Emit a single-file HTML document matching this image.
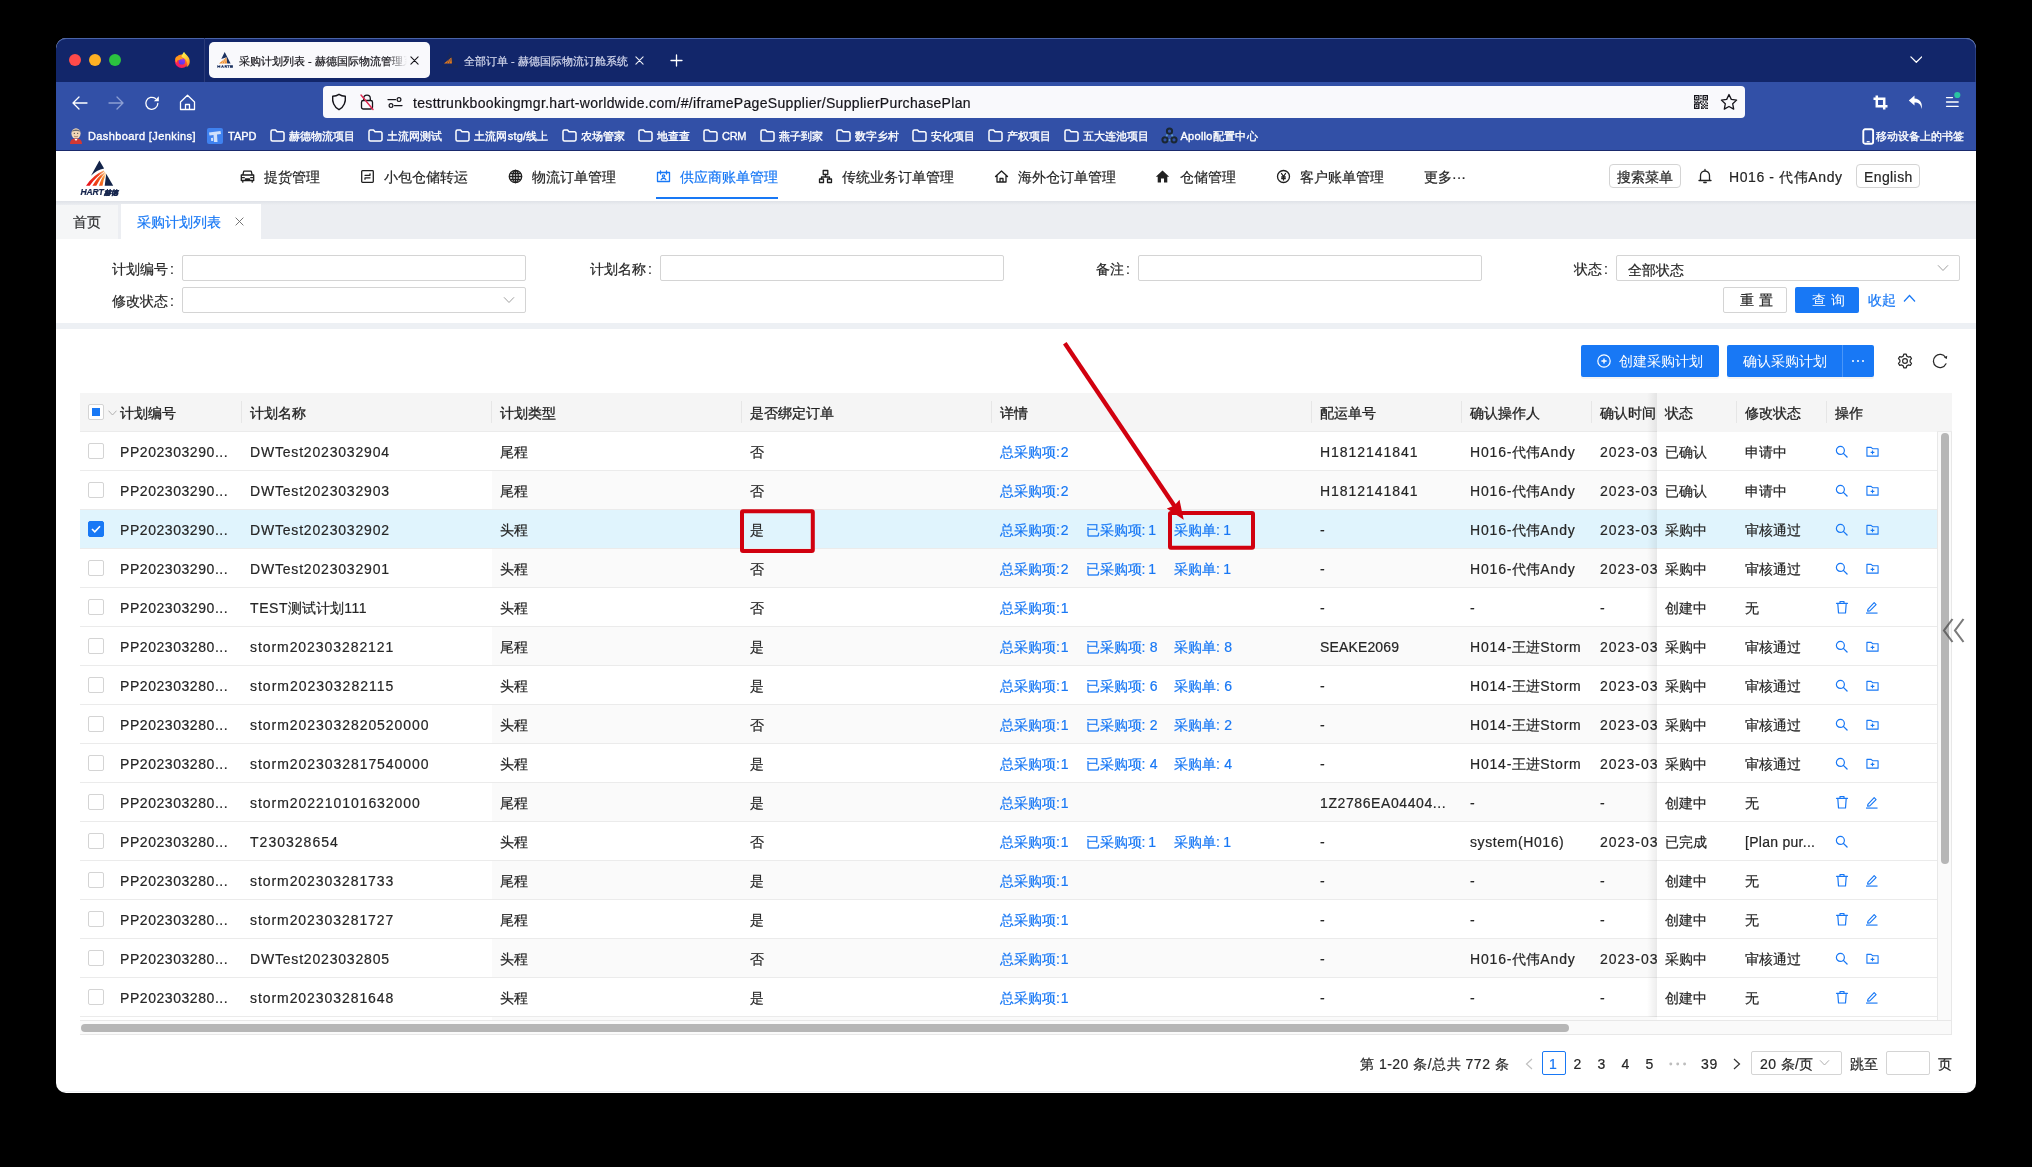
<!DOCTYPE html>
<html lang="zh"><head><meta charset="utf-8"><title>采购计划列表 - 赫德国际物流管理</title>
<style>
*{box-sizing:border-box;margin:0;padding:0}
html,body{width:2032px;height:1167px;overflow:hidden;background:#000}
body{font-family:"Liberation Sans",sans-serif;font-size:14px;color:#262626;position:relative;-webkit-text-stroke:0.2px}
.a{position:absolute}
.t{position:absolute;white-space:nowrap;line-height:20px;height:20px}
#win{left:56px;top:38px;width:1920px;height:1055px;border-radius:10px;overflow:hidden;background:#fff}
#tabbar{left:56px;top:38px;width:1920px;height:44px;background:#12266a;border-radius:10px 10px 0 0;box-shadow:inset 0 1px 0 rgba(110,140,210,.6),inset -1px 0 0 rgba(110,140,210,.25)}
#navbar{left:56px;top:82px;width:1920px;height:68px;background:#3250a7}
.bm{font-size:11px;color:#fff;top:126px;-webkit-text-stroke:0.35px #fff}
.nav{font-size:14px;color:#262626;top:166.5px}
.lbl{font-size:14px;color:#262626}
.inp{border:1px solid #d4d4d4;border-radius:2px;background:#fff;height:26px;width:344px}
.th{color:#222;top:403px;-webkit-text-stroke:0.3px #222}
.sep{width:1px;height:22px;top:401px;background:#e6e6e6}
.row{left:80px;width:1857px;height:39px;border-bottom:1px solid #ebebeb}
.c{position:absolute;white-space:nowrap;line-height:20px;height:20px;top:9.5px;color:#262626}
.lk{color:#1878f5}
.cb{position:absolute;left:8px;top:11px;width:16px;height:16px;border:1px solid #d4d4d4;border-radius:2px;background:#fff}
.ic{position:absolute}
.pg{font-size:14px;color:#262626;top:1054px}
</style></head>
<body>
<div class="a" id="root" style="left:0;top:0;width:2032px;height:1167px;will-change:transform">
<div class="a" id="win"></div>
<div class="a" id="tabbar"></div>
<div class="a" id="navbar"></div>
<div class="a" style="left:69px;top:54px;width:12px;height:12px;border-radius:6px;background:#fe4a4a"></div><div class="a" style="left:89px;top:54px;width:12px;height:12px;border-radius:6px;background:#feb024"></div><div class="a" style="left:109px;top:54px;width:12px;height:12px;border-radius:6px;background:#2bc13f"></div>
<svg class="a" style="left:174px;top:52px" width="16" height="16" viewBox="0 0 16 16"><defs><linearGradient id="ffa" x1="0.85" y1="0.1" x2="0.25" y2="1"><stop offset="0" stop-color="#ffc32e"/><stop offset="0.3" stop-color="#ff7a1e"/><stop offset="0.62" stop-color="#ff3040"/><stop offset="1" stop-color="#ee0f7c"/></linearGradient><linearGradient id="ffb" x1="0.3" y1="0" x2="0.8" y2="1"><stop offset="0" stop-color="#fff44f"/><stop offset="0.6" stop-color="#ffbd2e"/><stop offset="1" stop-color="#ff8a1e"/></linearGradient><linearGradient id="ffc" x1="0.7" y1="0" x2="0.3" y2="1"><stop offset="0" stop-color="#a033e8"/><stop offset="1" stop-color="#4a3cf0"/></linearGradient></defs><circle cx="7.700" cy="9.200" r="6.800" fill="url(#ffa)"/><path d="M7.600 5C7.900 3 9 1.200 10.100 -0.200C10.800 1.600 12.300 2.600 13.500 3.900C15.600 6.100 16.300 9 15.300 12.200C14.600 13.500 13.600 14.600 12.300 15.200C13.300 13.800 13.500 12 13 10.600C12.700 8 10.500 6 7.600 5Z" fill="url(#ffb)"/><circle cx="7.900" cy="9.400" r="3.200" fill="url(#ffc)"/><path d="M1.800 5.300C2.500 4.500 3.300 4.300 4.200 4.500C4.400 4 4.700 3.500 5.200 3.200C5.500 4.100 6.100 4.700 6.900 5.100C8 5.700 8.700 6.500 8.900 7.500C8 7 7 7 6.100 7.500C5.500 8.200 4.900 8.300 4 8C3.100 8.500 2.600 9.500 2.800 11C1.200 9.500 0.900 7.100 1.800 5.300Z" fill="#ff9a1a"/></svg>
<div class="a" style="left:204px;top:38px;width:1px;height:44px;background:#2b3b78"></div>
<div class="a" style="left:209px;top:42px;width:221px;height:36px;border-radius:5px;background:#f9f9fc"></div>
<svg class="a" style="left:217px;top:52px" width="16" height="16" viewBox="0 0 16 16"><path d="M7.700 0L13.600 11.500H10.200L9.500 5.300L4.300 7Z" fill="#1b3160"/><path d="M9.400 5.400L9.900 11.500H2Z" fill="#f08a24"/><path d="M7.300 7.400L4.800 11.500M8.600 7.300L7.300 11.500" stroke="#f9f9fc" stroke-width="0.500"/><path d="M0.300 13.300h1v0.800h1v-0.800h1v2.500h-1v-0.900h-1v0.900h-1zM4 15.800l1-2.500h1l1 2.500h-0.900l-0.200-0.500h-0.900l-0.200 0.500zM7.600 13.300h2.200v1.500l0.500 1h-1l-0.400-0.900h-0.400v0.900h-0.900zM10.200 13.300h2.400v0.700h-0.800v1.800h-0.900v-1.800h-0.700zM12.900 13.300h3v2.500h-3z" fill="#1b3160"/></svg>
<div class="t" style="left:239px;top:51.5px;font-size:11px;color:#15141a;width:168px;overflow:hidden;line-height:18px;height:18px">采购计划列表 - 赫德国际物流管理系统</div>
<div class="a" style="left:387px;top:46px;width:20px;height:28px;background:linear-gradient(90deg,rgba(249,249,252,0),#f9f9fc)"></div>
<svg class="a" style="left:409.5px;top:55.5px" width="9" height="9" viewBox="0 0 10 10"><path d="M1 1L9 9M9 1L1 9" stroke="#15141a" stroke-width="1.2" fill="none" stroke-linecap="round"/></svg>
<svg class="a" style="left:442px;top:52px" width="16" height="16" viewBox="0 0 16 16"><path d="M7.700 0L13.600 11.500H10.200L9.500 5.300L4.300 7Z" fill="#18285c"/><path d="M9.400 5.400L9.900 11.500H2Z" fill="#f07f17"/><path d="M7.300 7.400L4.800 11.500M8.600 7.300L7.300 11.500" stroke="#12266a" stroke-width="0.500"/><path d="M0.300 13.300h1v0.800h1v-0.800h1v2.500h-1v-0.900h-1v0.900h-1zM4 15.800l1-2.500h1l1 2.500h-0.900l-0.200-0.500h-0.900l-0.200 0.500zM7.600 13.300h2.200v1.500l0.500 1h-1l-0.400-0.900h-0.400v0.900h-0.900zM10.200 13.300h2.400v0.700h-0.800v1.800h-0.900v-1.800h-0.700zM12.900 13.300h3v2.500h-3z" fill="#18285c"/></svg>
<div class="t" style="left:464px;top:51.5px;font-size:11px;color:#d3d7ec;line-height:18px;height:18px">全部订单 - 赫德国际物流订舱系统</div>
<svg class="a" style="left:634.5px;top:55.5px" width="9" height="9" viewBox="0 0 10 10"><path d="M1 1L9 9M9 1L1 9" stroke="#f0f1f8" stroke-width="1.2" fill="none" stroke-linecap="round"/></svg>
<svg class="a" style="left:670px;top:54px" width="13" height="13" viewBox="0 0 13 13"><path d="M6.500 1V12M1 6.500H12" stroke="#fff" stroke-width="1.300" stroke-linecap="round"/></svg>
<svg class="a" style="left:1909.700px;top:56px" width="12.600" height="7.200" viewBox="0 0 14 8"><path d="M1 1L7 7L13 1" stroke="#fff" stroke-width="1.400" fill="none" stroke-linecap="round" stroke-linejoin="round"/></svg>
<svg class="a" style="left:72px;top:96px" width="16" height="14" viewBox="0 0 16 14"><path d="M15 7H1.500M7 1L1 7L7 13" stroke="#fff" stroke-width="1.300" fill="none" stroke-linecap="round" stroke-linejoin="round"/></svg>
<svg class="a" style="left:108px;top:96px" width="16" height="14" viewBox="0 0 16 14"><path d="M1 7H14.500M9 1L15 7L9 13" stroke="#8d9fd3" stroke-width="1.300" fill="none" stroke-linecap="round" stroke-linejoin="round"/></svg>
<svg class="a" style="left:144px;top:95px" width="16" height="16" viewBox="0 0 16 16"><path d="M13.800 8.500A6 6 0 1 1 11.500 3.600" stroke="#fff" stroke-width="1.300" fill="none" stroke-linecap="round"/><path d="M14.800 1.300V6.200H9.900Z" fill="#fff"/></svg>
<svg class="a" style="left:179px;top:94px" width="17" height="17" viewBox="0 0 17 17"><path d="M1.500 8L8.500 1.300L15.500 8V15.500H1.500Z M6.500 15.500V10.500H10.500V15.500" stroke="#fff" stroke-width="1.300" fill="none" stroke-linejoin="round"/></svg>
<div class="a" style="left:323px;top:86px;width:1422px;height:32px;border-radius:4px;background:#f9f9fc"></div>
<svg class="a" style="left:331px;top:93px" width="16" height="18" viewBox="0 0 16 18"><path d="M8 1.300C10 2.600 12 3.100 14.300 3.300C14.600 6 14.400 8.500 13.300 11C12.200 13.500 10.300 15.500 8 16.700C5.700 15.500 3.800 13.500 2.700 11C1.600 8.500 1.400 6 1.700 3.300C4 3.100 6 2.600 8 1.300Z" stroke="#15141a" stroke-width="1.400" fill="none" stroke-linejoin="round"/></svg>
<svg class="a" style="left:359px;top:93px" width="16" height="18" viewBox="0 0 16 18"><path d="M4.700 7.500V5.500A3.300 3.300 0 0 1 11.300 5.500V7.500" stroke="#15141a" stroke-width="1.300" fill="none"/><rect x="2.500" y="7.500" width="11" height="8.500" rx="1.800" stroke="#15141a" stroke-width="1.300" fill="none"/><path d="M2 2L14 16.500" stroke="#e22850" stroke-width="1.400" stroke-linecap="round"/></svg>
<svg class="a" style="left:387px;top:95px" width="16" height="15" viewBox="0 0 16 15"><path d="M1 4.600H8.500" stroke="#15141a" stroke-width="1.300" stroke-linecap="round"/><circle cx="12" cy="4.600" r="1.900" stroke="#15141a" stroke-width="1.200" fill="none"/><path d="M7.500 10.600H15" stroke="#15141a" stroke-width="1.300" stroke-linecap="round"/><circle cx="4" cy="10.600" r="1.900" stroke="#15141a" stroke-width="1.200" fill="none"/></svg>
<div class="t" style="left:413px;top:93px;font-size:14px;color:#15141a;letter-spacing:0.32px">testtrunkbookingmgr.hart-worldwide.com/#/iframePageSupplier/SupplierPurchasePlan</div>
<svg class="a" style="left:1694px;top:95px" width="14" height="14" viewBox="0 0 14 14" fill="#15141a"><rect x="0.65" y="0.65" width="4.200" height="4.200" stroke="#15141a" stroke-width="1.300" fill="none"/><rect x="2.00" y="2.00" width="1.500" height="1.500"/><rect x="9.15" y="0.65" width="4.200" height="4.200" stroke="#15141a" stroke-width="1.300" fill="none"/><rect x="10.50" y="2.00" width="1.500" height="1.500"/><rect x="0.65" y="9.15" width="4.200" height="4.200" stroke="#15141a" stroke-width="1.300" fill="none"/><rect x="2.00" y="10.50" width="1.500" height="1.500"/><rect x="6.2" y="0.0" width="1.500" height="1.500"/><rect x="6.2" y="2.8" width="1.500" height="1.500"/><rect x="6.2" y="5.6" width="1.500" height="1.500"/><rect x="0.0" y="6.2" width="1.500" height="1.500"/><rect x="2.8" y="6.2" width="1.500" height="1.500"/><rect x="5.6" y="7.0" width="1.500" height="1.500"/><rect x="8.4" y="6.2" width="1.500" height="1.500"/><rect x="11.2" y="6.2" width="1.500" height="1.500"/><rect x="12.6" y="7.6" width="1.500" height="1.500"/><rect x="7.0" y="8.4" width="1.500" height="1.500"/><rect x="9.8" y="8.4" width="1.500" height="1.500"/><rect x="12.6" y="9.8" width="1.500" height="1.500"/><rect x="8.4" y="9.8" width="1.500" height="1.500"/><rect x="11.2" y="9.8" width="1.500" height="1.500"/><rect x="7.0" y="11.2" width="1.500" height="1.500"/><rect x="9.8" y="11.2" width="1.500" height="1.500"/><rect x="12.6" y="12.6" width="1.500" height="1.500"/><rect x="8.4" y="12.6" width="1.500" height="1.500"/><rect x="11.2" y="12.6" width="1.500" height="1.500"/><rect x="7.0" y="12.6" width="1.500" height="1.500"/><rect x="4.2" y="7.0" width="1.500" height="1.500"/><rect x="1.4" y="7.0" width="1.500" height="1.500"/></svg>
<svg class="a" style="left:1720px;top:93px" width="18" height="18" viewBox="0 0 18 18"><path d="M9 1.500L11.300 6.400L16.600 7.100L12.700 10.800L13.700 16.100L9 13.500L4.300 16.100L5.300 10.800L1.400 7.100L6.700 6.400Z" stroke="#15141a" stroke-width="1.300" fill="none" stroke-linejoin="round"/></svg>
<svg class="a" style="left:1873px;top:94.500px" width="15" height="15" viewBox="0 0 15 15"><path d="M3.800 0.500V11.200H14.500M0.500 3.800H11.200V14.500" stroke="#fff" stroke-width="2.500" fill="none"/></svg>
<svg class="a" style="left:1908px;top:94px" width="16" height="16" viewBox="0 0 16 16"><path d="M6.500 1.500L0.800 6.500L6.500 11.500V8.400C10.500 8.400 13 10 13.500 15C15 9.500 12 4.800 6.500 4.600Z" fill="#fff"/></svg>
<svg class="a" style="left:1945px;top:91px" width="18" height="18" viewBox="0 0 18 18"><path d="M1.500 6.600H7.500M1.500 11H13.200M1.500 15.300H13.200" stroke="#fff" stroke-width="1.300" stroke-linecap="round"/><circle cx="12.300" cy="4" r="3.100" fill="#2ac3a2"/></svg>
<svg class="a" style="left:68px;top:127px" width="16" height="17" viewBox="0 0 16 17"><ellipse cx="8" cy="6.500" rx="4.600" ry="5.200" fill="#f0d6b7"/><path d="M3.400 5C3.800 1.500 12.200 1.500 12.600 5C11 3.600 5 3.600 3.400 5Z" fill="#6d6b6d"/><path d="M2 17C2 12.500 5 11.500 8 11.500S14 12.500 14 17Z" fill="#d33833"/><path d="M6.500 12L8 14L9.500 12Z" fill="#fff"/><circle cx="6.300" cy="6.300" r="0.600" fill="#333"/><circle cx="9.700" cy="6.300" r="0.600" fill="#333"/><path d="M6 9.200Q8 10.300 10 9.200" stroke="#81603f" stroke-width="0.600" fill="none"/></svg>
<div class="t bm" style="left:88px;letter-spacing:0.40px">Dashboard [Jenkins]</div>
<svg class="a" style="left:207px;top:128px" width="16" height="16" viewBox="0 0 16 16"><rect width="16" height="16" rx="2" fill="#3f82f0"/><path d="M2 4.500L13.500 3L14 6L10 6.500L10.500 14H7L6.500 7L2.500 7.500Z" fill="#cfe0fb"/><path d="M4 10L6 9.800L6.200 13L4.200 13Z" fill="#cfe0fb"/></svg>
<div class="t bm" style="left:228px;letter-spacing:-0.01px">TAPD</div>
<svg class="a" style="left:270px;top:129px" width="15" height="13" viewBox="0 0 15 13"><path d="M1 2.500A1.500 1.500 0 0 1 2.500 1H5.500L7 2.800H12.500A1.500 1.500 0 0 1 14 4.300V10.500A1.500 1.500 0 0 1 12.500 12H2.500A1.500 1.500 0 0 1 1 10.500Z" stroke="#fff" stroke-width="1.500" fill="none" stroke-linejoin="round"/></svg><div class="t bm" style="left:289px">赫德物流项目</div>
<svg class="a" style="left:368px;top:129px" width="15" height="13" viewBox="0 0 15 13"><path d="M1 2.500A1.500 1.500 0 0 1 2.500 1H5.500L7 2.800H12.500A1.500 1.500 0 0 1 14 4.300V10.500A1.500 1.500 0 0 1 12.500 12H2.500A1.500 1.500 0 0 1 1 10.500Z" stroke="#fff" stroke-width="1.500" fill="none" stroke-linejoin="round"/></svg><div class="t bm" style="left:387px">土流网测试</div>
<svg class="a" style="left:455px;top:129px" width="15" height="13" viewBox="0 0 15 13"><path d="M1 2.500A1.500 1.500 0 0 1 2.500 1H5.500L7 2.800H12.500A1.500 1.500 0 0 1 14 4.300V10.500A1.500 1.500 0 0 1 12.500 12H2.500A1.500 1.500 0 0 1 1 10.500Z" stroke="#fff" stroke-width="1.500" fill="none" stroke-linejoin="round"/></svg><div class="t bm" style="left:474px;letter-spacing:0.22px">土流网stg/线上</div>
<svg class="a" style="left:562px;top:129px" width="15" height="13" viewBox="0 0 15 13"><path d="M1 2.500A1.500 1.500 0 0 1 2.500 1H5.500L7 2.800H12.500A1.500 1.500 0 0 1 14 4.300V10.500A1.500 1.500 0 0 1 12.500 12H2.500A1.500 1.500 0 0 1 1 10.500Z" stroke="#fff" stroke-width="1.500" fill="none" stroke-linejoin="round"/></svg><div class="t bm" style="left:581px">农场管家</div>
<svg class="a" style="left:638px;top:129px" width="15" height="13" viewBox="0 0 15 13"><path d="M1 2.500A1.500 1.500 0 0 1 2.500 1H5.500L7 2.800H12.500A1.500 1.500 0 0 1 14 4.300V10.500A1.500 1.500 0 0 1 12.500 12H2.500A1.500 1.500 0 0 1 1 10.500Z" stroke="#fff" stroke-width="1.500" fill="none" stroke-linejoin="round"/></svg><div class="t bm" style="left:657px">地查查</div>
<svg class="a" style="left:703px;top:129px" width="15" height="13" viewBox="0 0 15 13"><path d="M1 2.500A1.500 1.500 0 0 1 2.500 1H5.500L7 2.800H12.500A1.500 1.500 0 0 1 14 4.300V10.500A1.500 1.500 0 0 1 12.500 12H2.500A1.500 1.500 0 0 1 1 10.500Z" stroke="#fff" stroke-width="1.500" fill="none" stroke-linejoin="round"/></svg><div class="t bm" style="left:722px;letter-spacing:-0.28px">CRM</div>
<svg class="a" style="left:760px;top:129px" width="15" height="13" viewBox="0 0 15 13"><path d="M1 2.500A1.500 1.500 0 0 1 2.500 1H5.500L7 2.800H12.500A1.500 1.500 0 0 1 14 4.300V10.500A1.500 1.500 0 0 1 12.500 12H2.500A1.500 1.500 0 0 1 1 10.500Z" stroke="#fff" stroke-width="1.500" fill="none" stroke-linejoin="round"/></svg><div class="t bm" style="left:779px">燕子到家</div>
<svg class="a" style="left:836px;top:129px" width="15" height="13" viewBox="0 0 15 13"><path d="M1 2.500A1.500 1.500 0 0 1 2.500 1H5.500L7 2.800H12.500A1.500 1.500 0 0 1 14 4.300V10.500A1.500 1.500 0 0 1 12.500 12H2.500A1.500 1.500 0 0 1 1 10.500Z" stroke="#fff" stroke-width="1.500" fill="none" stroke-linejoin="round"/></svg><div class="t bm" style="left:855px">数字乡村</div>
<svg class="a" style="left:912px;top:129px" width="15" height="13" viewBox="0 0 15 13"><path d="M1 2.500A1.500 1.500 0 0 1 2.500 1H5.500L7 2.800H12.500A1.500 1.500 0 0 1 14 4.300V10.500A1.500 1.500 0 0 1 12.500 12H2.500A1.500 1.500 0 0 1 1 10.500Z" stroke="#fff" stroke-width="1.500" fill="none" stroke-linejoin="round"/></svg><div class="t bm" style="left:931px">安化项目</div>
<svg class="a" style="left:988px;top:129px" width="15" height="13" viewBox="0 0 15 13"><path d="M1 2.500A1.500 1.500 0 0 1 2.500 1H5.500L7 2.800H12.500A1.500 1.500 0 0 1 14 4.300V10.500A1.500 1.500 0 0 1 12.500 12H2.500A1.500 1.500 0 0 1 1 10.500Z" stroke="#fff" stroke-width="1.500" fill="none" stroke-linejoin="round"/></svg><div class="t bm" style="left:1007px">产权项目</div>
<svg class="a" style="left:1064px;top:129px" width="15" height="13" viewBox="0 0 15 13"><path d="M1 2.500A1.500 1.500 0 0 1 2.500 1H5.500L7 2.800H12.500A1.500 1.500 0 0 1 14 4.300V10.500A1.500 1.500 0 0 1 12.500 12H2.500A1.500 1.500 0 0 1 1 10.500Z" stroke="#fff" stroke-width="1.500" fill="none" stroke-linejoin="round"/></svg><div class="t bm" style="left:1083px">五大连池项目</div>
<svg class="a" style="left:1160.500px;top:127px" width="17" height="17" viewBox="0 0 17 17"><path d="M7 6.300L4.800 10.300M10 6.300L12.200 10.300M6.500 13H10.500" stroke="#5e9fd6" stroke-width="1.600"/><circle cx="8.500" cy="4.200" r="2.600" stroke="#1a2733" stroke-width="2" fill="none"/><circle cx="4" cy="12.800" r="2.600" stroke="#1a2733" stroke-width="2" fill="none"/><circle cx="13" cy="12.800" r="2.600" stroke="#1a2733" stroke-width="2" fill="none"/></svg>
<div class="t bm" style="left:1180.5px;letter-spacing:0.27px">Apollo配置中心</div>
<svg class="a" style="left:1862px;top:127.500px" width="13" height="17" viewBox="0 0 13 17"><rect x="1.300" y="1.300" width="9.800" height="14.400" rx="1.800" stroke="#fff" stroke-width="1.900" fill="none"/><path d="M4.700 13.700H7.700" stroke="#fff" stroke-width="1.200"/></svg>
<div class="t bm" style="left:1876px">移动设备上的书签</div>
<div class="a" style="left:56px;top:150px;width:1920px;height:51px;background:#fff;border-top:1px solid #1a2a6c"></div>
<div class="a" style="left:56px;top:201px;width:1920px;height:38px;background:linear-gradient(#dfe2e8,#eceef2 4px,#eceef2)"></div>
<svg class="a" style="left:70px;top:152px" width="60" height="48" viewBox="0 0 60 48"><defs><linearGradient id="lg1" x1="0" y1="1" x2="0.9" y2="0"><stop offset="0" stop-color="#e6101c"/><stop offset="0.7" stop-color="#ee3a1a"/><stop offset="1" stop-color="#f7b070"/></linearGradient><linearGradient id="lg2" x1="0" y1="1" x2="0.8" y2="0"><stop offset="0" stop-color="#ea2a14"/><stop offset="0.7" stop-color="#f2601a"/><stop offset="1" stop-color="#f9c08a"/></linearGradient><linearGradient id="lg3" x1="0" y1="1" x2="0.6" y2="0"><stop offset="0" stop-color="#f0501a"/><stop offset="0.7" stop-color="#f58a2a"/><stop offset="1" stop-color="#fbd0a0"/></linearGradient></defs><path d="M29.400 8.400L34.100 16.400Q26.500 17.800 21 23.800Z" fill="#13244a"/><path d="M36.200 21.800L43.200 33.700H34.700Z" fill="#13244a"/><path d="M16 33.700Q23.500 22.800 33.600 18.500L34.500 19.600Q26.500 24.300 19.700 33.700Z" fill="url(#lg1)"/><path d="M22.400 33.700Q27.800 24.300 34.700 19.900L35.400 20.700Q30 26.200 26.300 33.700Z" fill="url(#lg2)"/><path d="M29 33.700Q31.300 25.800 35.600 20.900L36.100 21.900Q33.400 27.200 32.500 33.700Z" fill="url(#lg3)"/></svg>
<div class="t" style="left:80.500px;top:186.800px;font-size:8.600px;font-weight:bold;font-style:italic;color:#15254d;line-height:10px;height:10px;letter-spacing:-0.150px">HART<span style="font-size:7px;letter-spacing:0">赫德</span></div>
<svg class="a" style="left:240.0px;top:168.5px" width="15" height="15" viewBox="0 0 15 15"><path d="M2.800 6L3.800 2.200H11.200L12.200 6M1.300 6H13.700V11.500H1.300ZM2.800 11.500V13.200M12.200 11.500V13.200M1.300 8.700H4.300M10.700 8.700H13.700M5.500 11.500V10H9.500V11.500" stroke="#1f1f1f" stroke-width="1.300" fill="none" stroke-linejoin="round" stroke-linecap="round"/></svg>
<div class="t nav" style="left:264px">提货管理</div>
<svg class="a" style="left:360.0px;top:168.5px" width="15" height="15" viewBox="0 0 15 15"><rect x="1.700" y="1.700" width="11.600" height="11.600" rx="0.800" stroke="#1f1f1f" stroke-width="1.300" fill="none" stroke-linejoin="round" stroke-linecap="round"/><path d="M5 6.300H10V4.800M10 8.800H5V10.300" stroke="#1f1f1f" stroke-width="1.300" fill="none" stroke-linejoin="round" stroke-linecap="round"/></svg>
<div class="t nav" style="left:384px">小包仓储转运</div>
<svg class="a" style="left:508.0px;top:168.5px" width="15" height="15" viewBox="0 0 15 15"><circle cx="7.500" cy="7.500" r="6.200" stroke="#1f1f1f" stroke-width="1.300" fill="none" stroke-linejoin="round" stroke-linecap="round"/><ellipse cx="7.500" cy="7.500" rx="2.800" ry="6" stroke="#1f1f1f" stroke-width="1.300" fill="none" stroke-linejoin="round" stroke-linecap="round"/><path d="M1.500 7.500H13.500M2.500 4.500H12.500M2.500 10.500H12.500M7.500 1.500V13.500" stroke="#1f1f1f" stroke-width="1.300" fill="none" stroke-linejoin="round" stroke-linecap="round"/></svg>
<div class="t nav" style="left:532px">物流订单管理</div>
<svg class="a" style="left:656.0px;top:168.5px" width="15" height="15" viewBox="0 0 15 15"><path d="M1.500 3.500H13.500V12.500H1.500ZM4.500 2V5M10.500 2V5" stroke="#1878f5" stroke-width="1.300" fill="none" stroke-linejoin="round" stroke-linecap="round"/><circle cx="7.500" cy="7" r="1.200" stroke="#1878f5" stroke-width="1.300" fill="none" stroke-linejoin="round" stroke-linecap="round"/><path d="M5.200 10.500C5.500 9 9.500 9 9.800 10.500" stroke="#1878f5" stroke-width="1.300" fill="none" stroke-linejoin="round" stroke-linecap="round"/></svg>
<div class="t nav" style="left:680px;color:#1878f5">供应商账单管理</div>
<div class="a" style="left:656px;top:197px;width:122px;height:2px;background:#1878f5"></div>
<svg class="a" style="left:818.0px;top:169.0px" width="15" height="15" viewBox="0 0 15 15"><rect x="5.200" y="1.500" width="4.600" height="4" stroke="#1f1f1f" stroke-width="1.300" fill="none" stroke-linejoin="round" stroke-linecap="round" stroke-width="1.400"/><rect x="1.500" y="10" width="4" height="3.500" stroke="#1f1f1f" stroke-width="1.300" fill="none" stroke-linejoin="round" stroke-linecap="round" stroke-width="1.400"/><rect x="9.500" y="10" width="4" height="3.500" stroke="#1f1f1f" stroke-width="1.300" fill="none" stroke-linejoin="round" stroke-linecap="round" stroke-width="1.400"/><path d="M7.500 5.500V8M3.500 10V8H11.500V10" stroke="#1f1f1f" stroke-width="1.300" fill="none" stroke-linejoin="round" stroke-linecap="round" stroke-width="1.400"/></svg>
<div class="t nav" style="left:842px">传统业务订单管理</div>
<svg class="a" style="left:994.0px;top:169.0px" width="15" height="15" viewBox="0 0 15 15"><path d="M1.500 7.500L7.500 2L13.500 7.500M3 6.500V13H12V6.500M6 13V9.500H9V13" stroke="#1f1f1f" stroke-width="1.300" fill="none" stroke-linejoin="round" stroke-linecap="round"/></svg>
<div class="t nav" style="left:1018px">海外仓订单管理</div>
<svg class="a" style="left:1155.0px;top:169.0px" width="15" height="15" viewBox="0 0 15 15"><path d="M0.800 7.800L7.500 1.500L14.200 7.800H12.300V13.500H9V9.500H6V13.500H2.700V7.800Z" fill="#222"/></svg>
<div class="t nav" style="left:1180px">仓储管理</div>
<svg class="a" style="left:1276.0px;top:169.0px" width="15" height="15" viewBox="0 0 15 15"><circle cx="7.500" cy="7.500" r="6" stroke="#1f1f1f" stroke-width="1.300" fill="none" stroke-linejoin="round" stroke-linecap="round"/><path d="M5.500 4.500L7.500 7.500L9.500 4.500M7.500 7.500V11M5.700 8H9.300M5.700 9.700H9.300" stroke="#1f1f1f" stroke-width="1.300" fill="none" stroke-linejoin="round" stroke-linecap="round"/></svg>
<div class="t nav" style="left:1300px">客户账单管理</div>
<div class="t nav" style="left:1424px">更多···</div>
<div class="a" style="left:1609px;top:164px;width:72px;height:24px;border:1px solid #d4d4d4;border-radius:4px"></div>
<div class="t nav" style="left:1617px">搜索菜单</div>
<svg class="a" style="left:1697.0px;top:168.0px" width="16" height="17" viewBox="0 0 16 17"><path d="M3.500 12.500V7.500A4.500 4.500 0 0 1 12.500 7.500V12.500M2 12.500H14M6.800 14.500H9.200M8 1.500V3" stroke="#222" stroke-width="1.300" fill="none" stroke-linecap="round"/></svg>
<div class="t nav" style="left:1729px;letter-spacing:0.600px">H016 - 代伟Andy</div>
<div class="a" style="left:1856px;top:164px;width:64px;height:24px;border:1px solid #d4d4d4;border-radius:4px"></div>
<div class="t nav" style="left:1864px;letter-spacing:0.400px">English</div>
<div class="a" style="left:56px;top:205px;width:62px;height:34px;background:#f5f6f7"></div>
<div class="t" style="left:73px;top:212px;color:#303133">首页</div>
<div class="a" style="left:121px;top:204px;width:140px;height:35px;background:#fff"></div>
<div class="t" style="left:137px;top:212px;color:#1878f5">采购计划列表</div>
<svg class="a" style="left:234.5px;top:216.5px" width="9" height="9" viewBox="0 0 10 10"><path d="M1 1L9 9M9 1L1 9" stroke="#666" stroke-width="1" fill="none" stroke-linecap="round"/></svg>
<div class="a" style="left:56px;top:239px;width:1920px;height:84px;background:#fff"></div>
<div class="a" style="left:56px;top:323px;width:1920px;height:6px;background:#edf0f4"></div>
<div class="t lbl" style="left:112px;top:259px">计划编号<span style="margin-left:2px">:</span></div>
<div class="a inp" style="left:182px;top:255px"></div>
<div class="t lbl" style="left:112px;top:291px">修改状态<span style="margin-left:2px">:</span></div>
<div class="a inp" style="left:182px;top:287px"></div>
<svg class="a" style="left:503px;top:296px" width="12" height="8" viewBox="0 0 12 8"><path d="M1 1.300L6 6.500L11 1.300" stroke="#a0a0a0" stroke-width="1" fill="none"/></svg>
<div class="t lbl" style="left:590px;top:259px">计划名称<span style="margin-left:2px">:</span></div>
<div class="a inp" style="left:660px;top:255px"></div>
<div class="t lbl" style="left:1096px;top:259px">备注<span style="margin-left:2px">:</span></div>
<div class="a inp" style="left:1138px;top:255px"></div>
<div class="t lbl" style="left:1574px;top:259px">状态<span style="margin-left:2px">:</span></div>
<div class="a inp" style="left:1616px;top:255px"></div>
<div class="t lbl" style="left:1628px;top:260px">全部状态</div>
<svg class="a" style="left:1937px;top:264px" width="12" height="8" viewBox="0 0 12 8"><path d="M1 1.300L6 6.500L11 1.300" stroke="#a0a0a0" stroke-width="1" fill="none"/></svg>
<div class="a" style="left:1723px;top:287px;width:64px;height:26px;border:1px solid #d4d4d4;border-radius:2px"></div>
<div class="t lbl" style="left:1740px;top:290px">重<span style="margin-left:5px">置</span></div>
<div class="a" style="left:1795px;top:287px;width:64px;height:26px;background:#1878f5;border-radius:2px"></div>
<div class="t lbl" style="left:1812px;top:290px;color:#fff;-webkit-text-stroke:0">查<span style="margin-left:5px">询</span></div>
<div class="t lbl" style="left:1868px;top:290px;color:#1878f5">收起</div>
<svg class="a" style="left:1903px;top:294px" width="13" height="9" viewBox="0 0 13 9"><path d="M1 7.500L6.500 1.500L12 7.500" stroke="#1878f5" stroke-width="1.200" fill="none"/></svg>
<div class="a" style="left:1581px;top:345px;width:138px;height:32px;background:#1878f5;border-radius:2px;box-shadow:0 2px 0 rgba(0,0,0,0.045)"></div>
<svg class="a" style="left:1597px;top:354px" width="14" height="14" viewBox="0 0 14 14"><circle cx="7" cy="7" r="6.200" stroke="#fff" stroke-width="1.200" fill="none"/><path d="M7 4.400V9.600M4.400 7H9.600" stroke="#fff" stroke-width="1.400"/></svg>
<div class="t" style="left:1619px;top:351px;color:#fff;-webkit-text-stroke:0">创建采购计划</div>
<div class="a" style="left:1727px;top:345px;width:147px;height:32px;background:#1878f5;border-radius:2px;box-shadow:0 2px 0 rgba(0,0,0,0.045)"></div>
<div class="a" style="left:1842px;top:345px;width:1px;height:32px;background:#4a96f8"></div>
<div class="t" style="left:1743px;top:351px;color:#fff;-webkit-text-stroke:0">确认采购计划</div>
<svg class="a" style="left:1851px;top:359px" width="14" height="4" viewBox="0 0 14 4"><circle cx="2" cy="2" r="1" fill="#fff"/><circle cx="7" cy="2" r="1" fill="#fff"/><circle cx="12" cy="2" r="1" fill="#fff"/></svg>
<svg class="a" style="left:1897px;top:353px" width="16" height="16" viewBox="0 0 16 16"><path d="M14.49 10.34L13.27 12.45L11.36 11.97L9.76 12.89L9.22 14.79L6.78 14.79L6.24 12.89L4.64 11.97L2.73 12.45L1.51 10.34L2.88 8.92L2.88 7.08L1.51 5.66L2.73 3.55L4.64 4.03L6.24 3.11L6.78 1.21L9.22 1.21L9.76 3.11L11.36 4.03L13.27 3.55L14.49 5.66L13.12 7.08L13.12 8.92Z" stroke="#2a2a2a" stroke-width="1.250" fill="none" stroke-linejoin="round"/><circle cx="8" cy="8" r="2.400" stroke="#2a2a2a" stroke-width="1.200" fill="none"/></svg>
<svg class="a" style="left:1932px;top:353px" width="17" height="16" viewBox="0 0 17 16"><path d="M13.600 4.500A6.600 6.600 0 1 0 13.980 10.800" stroke="#2a2a2a" stroke-width="1.250" fill="none" stroke-linecap="round"/><path d="M14.900 5.900L15.200 2.700L12 4.500Z" fill="#2a2a2a"/></svg>
<div class="a" style="left:80px;top:393px;width:1872px;height:39px;background:#f5f5f5;border-bottom:1px solid #ebebeb"></div>
<div class="a" style="left:88px;top:404px;width:16px;height:16px;border:1px solid #d4d4d4;border-radius:2px;background:#fff"></div><div class="a" style="left:92px;top:408px;width:8px;height:8px;background:#1878f5"></div>
<svg class="a" style="left:108px;top:410px" width="9" height="6" viewBox="0 0 9 6"><path d="M0.500 0.700L4.500 5L8.500 0.700" stroke="#b0b0b0" stroke-width="1" fill="none"/></svg>
<div class="t th" style="left:120px">计划编号</div><div class="t th" style="left:250px">计划名称</div><div class="t th" style="left:500px">计划类型</div><div class="t th" style="left:750px">是否绑定订单</div><div class="t th" style="left:1000px">详情</div><div class="t th" style="left:1320px">配运单号</div><div class="t th" style="left:1470px">确认操作人</div><div class="t th" style="left:1600px">确认时间</div>
<div class="a sep" style="left:241px"></div><div class="a sep" style="left:491px"></div><div class="a sep" style="left:741px"></div><div class="a sep" style="left:991px"></div><div class="a sep" style="left:1311px"></div><div class="a sep" style="left:1461px"></div><div class="a sep" style="left:1591px"></div>
<div class="a row" style="top:432px;background:#fff"><div class="cb"></div><div class="c" style="left:40px;letter-spacing:0.56px">PP202303290...</div><div class="c" style="left:170px;letter-spacing:0.81px">DWTest2023032904</div><div class="c" style="left:420px">尾程</div><div class="c" style="left:670px">否</div><div class="c lk" style="left:920px">总采购项<span style="letter-spacing:0.81px">:2</span></div><div class="c" style="left:1240px;letter-spacing:0.95px">H1812141841</div><div class="c" style="left:1390px"><span style="letter-spacing:0.84px">H016-</span>代伟<span style="letter-spacing:0.84px">Andy</span></div><div class="c" style="left:1520px;letter-spacing:1.02px">2023-03</div><div class="a" style="left:1577px;top:0;width:280px;height:38px;background:#fff"></div><div class="c" style="left:1585px">已确认</div><div class="c" style="left:1665px">申请中</div><svg class="ic" style="left:1755px;top:12.500px" width="13" height="13" viewBox="0 0 14 14"><circle cx="5.800" cy="5.800" r="4.300" stroke="#1878f5" stroke-width="1.300" fill="none"/><path d="M9 9L13 13" stroke="#1878f5" stroke-width="1.400" stroke-linecap="round"/></svg><svg class="ic" style="left:1786px;top:12.500px" width="13" height="13" viewBox="0 0 14 14"><path d="M1 2.500H5.500L7 4H13V12H1Z" stroke="#1878f5" stroke-width="1.200" fill="none" stroke-linejoin="round"/><path d="M7 6V10M5 8H9" stroke="#1878f5" stroke-width="1.200"/></svg></div>
<div class="a row" style="top:471px;background:#fff"><div class="a" style="left:412px;top:0;width:1165px;height:38px;background:#fafafa"></div><div class="cb"></div><div class="c" style="left:40px;letter-spacing:0.56px">PP202303290...</div><div class="c" style="left:170px;letter-spacing:0.81px">DWTest2023032903</div><div class="c" style="left:420px">尾程</div><div class="c" style="left:670px">否</div><div class="c lk" style="left:920px">总采购项<span style="letter-spacing:0.81px">:2</span></div><div class="c" style="left:1240px;letter-spacing:0.95px">H1812141841</div><div class="c" style="left:1390px"><span style="letter-spacing:0.84px">H016-</span>代伟<span style="letter-spacing:0.84px">Andy</span></div><div class="c" style="left:1520px;letter-spacing:1.02px">2023-03</div><div class="a" style="left:1577px;top:0;width:280px;height:38px;background:#fff"></div><div class="c" style="left:1585px">已确认</div><div class="c" style="left:1665px">申请中</div><svg class="ic" style="left:1755px;top:12.500px" width="13" height="13" viewBox="0 0 14 14"><circle cx="5.800" cy="5.800" r="4.300" stroke="#1878f5" stroke-width="1.300" fill="none"/><path d="M9 9L13 13" stroke="#1878f5" stroke-width="1.400" stroke-linecap="round"/></svg><svg class="ic" style="left:1786px;top:12.500px" width="13" height="13" viewBox="0 0 14 14"><path d="M1 2.500H5.500L7 4H13V12H1Z" stroke="#1878f5" stroke-width="1.200" fill="none" stroke-linejoin="round"/><path d="M7 6V10M5 8H9" stroke="#1878f5" stroke-width="1.200"/></svg></div>
<div class="a row" style="top:510px;background:#e0f4fd"><div class="cb" style="background:#1878f5;border-color:#1878f5"><svg style="position:absolute;left:2px;top:3px" width="10" height="8" viewBox="0 0 10 8"><path d="M1 4L3.800 6.800L9 1.200" stroke="#fff" stroke-width="1.600" fill="none"/></svg></div><div class="c" style="left:40px;letter-spacing:0.56px">PP202303290...</div><div class="c" style="left:170px;letter-spacing:0.81px">DWTest2023032902</div><div class="c" style="left:420px">头程</div><div class="c" style="left:670px">是</div><div class="c lk" style="left:920px">总采购项<span style="letter-spacing:0.81px">:2</span></div><div class="c lk" style="left:1005.5px">已采购项<span style="letter-spacing:-0.54px">: 1</span></div><div class="c lk" style="left:1094px">采购单<span style="letter-spacing:-0.29px">: 1</span></div><div class="c" style="left:1240px">-</div><div class="c" style="left:1390px"><span style="letter-spacing:0.84px">H016-</span>代伟<span style="letter-spacing:0.84px">Andy</span></div><div class="c" style="left:1520px;letter-spacing:1.02px">2023-03</div><div class="a" style="left:1577px;top:0;width:280px;height:38px;background:#e0f4fd"></div><div class="c" style="left:1585px">采购中</div><div class="c" style="left:1665px">审核通过</div><svg class="ic" style="left:1755px;top:12.500px" width="13" height="13" viewBox="0 0 14 14"><circle cx="5.800" cy="5.800" r="4.300" stroke="#1878f5" stroke-width="1.300" fill="none"/><path d="M9 9L13 13" stroke="#1878f5" stroke-width="1.400" stroke-linecap="round"/></svg><svg class="ic" style="left:1786px;top:12.500px" width="13" height="13" viewBox="0 0 14 14"><path d="M1 2.500H5.500L7 4H13V12H1Z" stroke="#1878f5" stroke-width="1.200" fill="none" stroke-linejoin="round"/><path d="M7 6V10M5 8H9" stroke="#1878f5" stroke-width="1.200"/></svg></div>
<div class="a row" style="top:549px;background:#fff"><div class="a" style="left:412px;top:0;width:1165px;height:38px;background:#fafafa"></div><div class="cb"></div><div class="c" style="left:40px;letter-spacing:0.56px">PP202303290...</div><div class="c" style="left:170px;letter-spacing:0.81px">DWTest2023032901</div><div class="c" style="left:420px">头程</div><div class="c" style="left:670px">否</div><div class="c lk" style="left:920px">总采购项<span style="letter-spacing:0.81px">:2</span></div><div class="c lk" style="left:1005.5px">已采购项<span style="letter-spacing:-0.54px">: 1</span></div><div class="c lk" style="left:1094px">采购单<span style="letter-spacing:-0.29px">: 1</span></div><div class="c" style="left:1240px">-</div><div class="c" style="left:1390px"><span style="letter-spacing:0.84px">H016-</span>代伟<span style="letter-spacing:0.84px">Andy</span></div><div class="c" style="left:1520px;letter-spacing:1.02px">2023-03</div><div class="a" style="left:1577px;top:0;width:280px;height:38px;background:#fff"></div><div class="c" style="left:1585px">采购中</div><div class="c" style="left:1665px">审核通过</div><svg class="ic" style="left:1755px;top:12.500px" width="13" height="13" viewBox="0 0 14 14"><circle cx="5.800" cy="5.800" r="4.300" stroke="#1878f5" stroke-width="1.300" fill="none"/><path d="M9 9L13 13" stroke="#1878f5" stroke-width="1.400" stroke-linecap="round"/></svg><svg class="ic" style="left:1786px;top:12.500px" width="13" height="13" viewBox="0 0 14 14"><path d="M1 2.500H5.500L7 4H13V12H1Z" stroke="#1878f5" stroke-width="1.200" fill="none" stroke-linejoin="round"/><path d="M7 6V10M5 8H9" stroke="#1878f5" stroke-width="1.200"/></svg></div>
<div class="a row" style="top:588px;background:#fff"><div class="cb"></div><div class="c" style="left:40px;letter-spacing:0.56px">PP202303290...</div><div class="c" style="left:170px"><span style="letter-spacing:0.59px">TEST</span>测试计划<span style="letter-spacing:0.59px">111</span></div><div class="c" style="left:420px">头程</div><div class="c" style="left:670px">否</div><div class="c lk" style="left:920px">总采购项<span style="letter-spacing:0.81px">:1</span></div><div class="c" style="left:1240px">-</div><div class="c" style="left:1390px">-</div><div class="c" style="left:1520px">-</div><div class="a" style="left:1577px;top:0;width:280px;height:38px;background:#fff"></div><div class="c" style="left:1585px">创建中</div><div class="c" style="left:1665px">无</div><svg class="ic" style="left:1755px;top:12px" width="14" height="14" viewBox="0 0 14 14"><path d="M1.500 3.300H12.500M5 3V1.500H9V3M2.800 3.500L3.500 13H10.500L11.200 3.500" stroke="#1878f5" stroke-width="1.200" fill="none" stroke-linejoin="round" stroke-linecap="round"/></svg><svg class="ic" style="left:1786px;top:12px;margin-left:-0.700px" width="13.500" height="14" viewBox="0 0 14 14"><path d="M3 9.500L9.500 2.500L11.500 4.500L5 11L2.700 11.400Z" stroke="#1878f5" stroke-width="1.200" fill="none" stroke-linejoin="round"/><path d="M1 13.300H13" stroke="#1878f5" stroke-width="1.200"/></svg></div>
<div class="a row" style="top:627px;background:#fff"><div class="a" style="left:412px;top:0;width:1165px;height:38px;background:#fafafa"></div><div class="cb"></div><div class="c" style="left:40px;letter-spacing:0.56px">PP202303280...</div><div class="c" style="left:170px;letter-spacing:0.93px">storm202303282121</div><div class="c" style="left:420px">尾程</div><div class="c" style="left:670px">是</div><div class="c lk" style="left:920px">总采购项<span style="letter-spacing:0.81px">:1</span></div><div class="c lk" style="left:1005.5px">已采购项<span style="letter-spacing:0.21px">: 8</span></div><div class="c lk" style="left:1094px">采购单<span style="letter-spacing:0.21px">: 8</span></div><div class="c" style="left:1240px;letter-spacing:0.14px">SEAKE2069</div><div class="c" style="left:1390px"><span style="letter-spacing:0.81px">H014-</span>王进<span style="letter-spacing:0.81px">Storm</span></div><div class="c" style="left:1520px;letter-spacing:1.02px">2023-03</div><div class="a" style="left:1577px;top:0;width:280px;height:38px;background:#fff"></div><div class="c" style="left:1585px">采购中</div><div class="c" style="left:1665px">审核通过</div><svg class="ic" style="left:1755px;top:12.500px" width="13" height="13" viewBox="0 0 14 14"><circle cx="5.800" cy="5.800" r="4.300" stroke="#1878f5" stroke-width="1.300" fill="none"/><path d="M9 9L13 13" stroke="#1878f5" stroke-width="1.400" stroke-linecap="round"/></svg><svg class="ic" style="left:1786px;top:12.500px" width="13" height="13" viewBox="0 0 14 14"><path d="M1 2.500H5.500L7 4H13V12H1Z" stroke="#1878f5" stroke-width="1.200" fill="none" stroke-linejoin="round"/><path d="M7 6V10M5 8H9" stroke="#1878f5" stroke-width="1.200"/></svg></div>
<div class="a row" style="top:666px;background:#fff"><div class="cb"></div><div class="c" style="left:40px;letter-spacing:0.56px">PP202303280...</div><div class="c" style="left:170px;letter-spacing:0.99px">storm202303282115</div><div class="c" style="left:420px">头程</div><div class="c" style="left:670px">是</div><div class="c lk" style="left:920px">总采购项<span style="letter-spacing:0.81px">:1</span></div><div class="c lk" style="left:1005.5px">已采购项<span style="letter-spacing:0.21px">: 6</span></div><div class="c lk" style="left:1094px">采购单<span style="letter-spacing:0.21px">: 6</span></div><div class="c" style="left:1240px">-</div><div class="c" style="left:1390px"><span style="letter-spacing:0.81px">H014-</span>王进<span style="letter-spacing:0.81px">Storm</span></div><div class="c" style="left:1520px;letter-spacing:1.02px">2023-03</div><div class="a" style="left:1577px;top:0;width:280px;height:38px;background:#fff"></div><div class="c" style="left:1585px">采购中</div><div class="c" style="left:1665px">审核通过</div><svg class="ic" style="left:1755px;top:12.500px" width="13" height="13" viewBox="0 0 14 14"><circle cx="5.800" cy="5.800" r="4.300" stroke="#1878f5" stroke-width="1.300" fill="none"/><path d="M9 9L13 13" stroke="#1878f5" stroke-width="1.400" stroke-linecap="round"/></svg><svg class="ic" style="left:1786px;top:12.500px" width="13" height="13" viewBox="0 0 14 14"><path d="M1 2.500H5.500L7 4H13V12H1Z" stroke="#1878f5" stroke-width="1.200" fill="none" stroke-linejoin="round"/><path d="M7 6V10M5 8H9" stroke="#1878f5" stroke-width="1.200"/></svg></div>
<div class="a row" style="top:705px;background:#fff"><div class="a" style="left:412px;top:0;width:1165px;height:38px;background:#fafafa"></div><div class="cb"></div><div class="c" style="left:40px;letter-spacing:0.56px">PP202303280...</div><div class="c" style="left:170px;letter-spacing:0.95px">storm2023032820520000</div><div class="c" style="left:420px">头程</div><div class="c" style="left:670px">否</div><div class="c lk" style="left:920px">总采购项<span style="letter-spacing:0.81px">:1</span></div><div class="c lk" style="left:1005.5px">已采购项<span style="letter-spacing:0.21px">: 2</span></div><div class="c lk" style="left:1094px">采购单<span style="letter-spacing:0.21px">: 2</span></div><div class="c" style="left:1240px">-</div><div class="c" style="left:1390px"><span style="letter-spacing:0.81px">H014-</span>王进<span style="letter-spacing:0.81px">Storm</span></div><div class="c" style="left:1520px;letter-spacing:1.02px">2023-03</div><div class="a" style="left:1577px;top:0;width:280px;height:38px;background:#fff"></div><div class="c" style="left:1585px">采购中</div><div class="c" style="left:1665px">审核通过</div><svg class="ic" style="left:1755px;top:12.500px" width="13" height="13" viewBox="0 0 14 14"><circle cx="5.800" cy="5.800" r="4.300" stroke="#1878f5" stroke-width="1.300" fill="none"/><path d="M9 9L13 13" stroke="#1878f5" stroke-width="1.400" stroke-linecap="round"/></svg><svg class="ic" style="left:1786px;top:12.500px" width="13" height="13" viewBox="0 0 14 14"><path d="M1 2.500H5.500L7 4H13V12H1Z" stroke="#1878f5" stroke-width="1.200" fill="none" stroke-linejoin="round"/><path d="M7 6V10M5 8H9" stroke="#1878f5" stroke-width="1.200"/></svg></div>
<div class="a row" style="top:744px;background:#fff"><div class="cb"></div><div class="c" style="left:40px;letter-spacing:0.56px">PP202303280...</div><div class="c" style="left:170px;letter-spacing:0.95px">storm2023032817540000</div><div class="c" style="left:420px">头程</div><div class="c" style="left:670px">是</div><div class="c lk" style="left:920px">总采购项<span style="letter-spacing:0.81px">:1</span></div><div class="c lk" style="left:1005.5px">已采购项<span style="letter-spacing:0.21px">: 4</span></div><div class="c lk" style="left:1094px">采购单<span style="letter-spacing:0.21px">: 4</span></div><div class="c" style="left:1240px">-</div><div class="c" style="left:1390px"><span style="letter-spacing:0.81px">H014-</span>王进<span style="letter-spacing:0.81px">Storm</span></div><div class="c" style="left:1520px;letter-spacing:1.02px">2023-03</div><div class="a" style="left:1577px;top:0;width:280px;height:38px;background:#fff"></div><div class="c" style="left:1585px">采购中</div><div class="c" style="left:1665px">审核通过</div><svg class="ic" style="left:1755px;top:12.500px" width="13" height="13" viewBox="0 0 14 14"><circle cx="5.800" cy="5.800" r="4.300" stroke="#1878f5" stroke-width="1.300" fill="none"/><path d="M9 9L13 13" stroke="#1878f5" stroke-width="1.400" stroke-linecap="round"/></svg><svg class="ic" style="left:1786px;top:12.500px" width="13" height="13" viewBox="0 0 14 14"><path d="M1 2.500H5.500L7 4H13V12H1Z" stroke="#1878f5" stroke-width="1.200" fill="none" stroke-linejoin="round"/><path d="M7 6V10M5 8H9" stroke="#1878f5" stroke-width="1.200"/></svg></div>
<div class="a row" style="top:783px;background:#fff"><div class="a" style="left:412px;top:0;width:1165px;height:38px;background:#fafafa"></div><div class="cb"></div><div class="c" style="left:40px;letter-spacing:0.56px">PP202303280...</div><div class="c" style="left:170px;letter-spacing:0.95px">storm202210101632000</div><div class="c" style="left:420px">尾程</div><div class="c" style="left:670px">是</div><div class="c lk" style="left:920px">总采购项<span style="letter-spacing:0.81px">:1</span></div><div class="c" style="left:1240px;letter-spacing:0.59px">1Z2786EA04404...</div><div class="c" style="left:1390px">-</div><div class="c" style="left:1520px">-</div><div class="a" style="left:1577px;top:0;width:280px;height:38px;background:#fff"></div><div class="c" style="left:1585px">创建中</div><div class="c" style="left:1665px">无</div><svg class="ic" style="left:1755px;top:12px" width="14" height="14" viewBox="0 0 14 14"><path d="M1.500 3.300H12.500M5 3V1.500H9V3M2.800 3.500L3.500 13H10.500L11.200 3.500" stroke="#1878f5" stroke-width="1.200" fill="none" stroke-linejoin="round" stroke-linecap="round"/></svg><svg class="ic" style="left:1786px;top:12px;margin-left:-0.700px" width="13.500" height="14" viewBox="0 0 14 14"><path d="M3 9.500L9.500 2.500L11.500 4.500L5 11L2.700 11.400Z" stroke="#1878f5" stroke-width="1.200" fill="none" stroke-linejoin="round"/><path d="M1 13.300H13" stroke="#1878f5" stroke-width="1.200"/></svg></div>
<div class="a row" style="top:822px;background:#fff"><div class="cb"></div><div class="c" style="left:40px;letter-spacing:0.56px">PP202303280...</div><div class="c" style="left:170px;letter-spacing:1.02px">T230328654</div><div class="c" style="left:420px">头程</div><div class="c" style="left:670px">否</div><div class="c lk" style="left:920px">总采购项<span style="letter-spacing:0.81px">:1</span></div><div class="c lk" style="left:1005.5px">已采购项<span style="letter-spacing:-0.54px">: 1</span></div><div class="c lk" style="left:1094px">采购单<span style="letter-spacing:-0.29px">: 1</span></div><div class="c" style="left:1240px">-</div><div class="c" style="left:1390px;letter-spacing:0.60px">system(H016)</div><div class="c" style="left:1520px;letter-spacing:1.02px">2023-03</div><div class="a" style="left:1577px;top:0;width:280px;height:38px;background:#fff"></div><div class="c" style="left:1585px">已完成</div><div class="c" style="left:1665px;letter-spacing:0.28px">[Plan pur...</div><svg class="ic" style="left:1755px;top:12.500px" width="13" height="13" viewBox="0 0 14 14"><circle cx="5.800" cy="5.800" r="4.300" stroke="#1878f5" stroke-width="1.300" fill="none"/><path d="M9 9L13 13" stroke="#1878f5" stroke-width="1.400" stroke-linecap="round"/></svg></div>
<div class="a row" style="top:861px;background:#fff"><div class="a" style="left:412px;top:0;width:1165px;height:38px;background:#fafafa"></div><div class="cb"></div><div class="c" style="left:40px;letter-spacing:0.56px">PP202303280...</div><div class="c" style="left:170px;letter-spacing:0.93px">storm202303281733</div><div class="c" style="left:420px">尾程</div><div class="c" style="left:670px">是</div><div class="c lk" style="left:920px">总采购项<span style="letter-spacing:0.81px">:1</span></div><div class="c" style="left:1240px">-</div><div class="c" style="left:1390px">-</div><div class="c" style="left:1520px">-</div><div class="a" style="left:1577px;top:0;width:280px;height:38px;background:#fff"></div><div class="c" style="left:1585px">创建中</div><div class="c" style="left:1665px">无</div><svg class="ic" style="left:1755px;top:12px" width="14" height="14" viewBox="0 0 14 14"><path d="M1.500 3.300H12.500M5 3V1.500H9V3M2.800 3.500L3.500 13H10.500L11.200 3.500" stroke="#1878f5" stroke-width="1.200" fill="none" stroke-linejoin="round" stroke-linecap="round"/></svg><svg class="ic" style="left:1786px;top:12px;margin-left:-0.700px" width="13.500" height="14" viewBox="0 0 14 14"><path d="M3 9.500L9.500 2.500L11.500 4.500L5 11L2.700 11.400Z" stroke="#1878f5" stroke-width="1.200" fill="none" stroke-linejoin="round"/><path d="M1 13.300H13" stroke="#1878f5" stroke-width="1.200"/></svg></div>
<div class="a row" style="top:900px;background:#fff"><div class="cb"></div><div class="c" style="left:40px;letter-spacing:0.56px">PP202303280...</div><div class="c" style="left:170px;letter-spacing:0.93px">storm202303281727</div><div class="c" style="left:420px">尾程</div><div class="c" style="left:670px">是</div><div class="c lk" style="left:920px">总采购项<span style="letter-spacing:0.81px">:1</span></div><div class="c" style="left:1240px">-</div><div class="c" style="left:1390px">-</div><div class="c" style="left:1520px">-</div><div class="a" style="left:1577px;top:0;width:280px;height:38px;background:#fff"></div><div class="c" style="left:1585px">创建中</div><div class="c" style="left:1665px">无</div><svg class="ic" style="left:1755px;top:12px" width="14" height="14" viewBox="0 0 14 14"><path d="M1.500 3.300H12.500M5 3V1.500H9V3M2.800 3.500L3.500 13H10.500L11.200 3.500" stroke="#1878f5" stroke-width="1.200" fill="none" stroke-linejoin="round" stroke-linecap="round"/></svg><svg class="ic" style="left:1786px;top:12px;margin-left:-0.700px" width="13.500" height="14" viewBox="0 0 14 14"><path d="M3 9.500L9.500 2.500L11.500 4.500L5 11L2.700 11.400Z" stroke="#1878f5" stroke-width="1.200" fill="none" stroke-linejoin="round"/><path d="M1 13.300H13" stroke="#1878f5" stroke-width="1.200"/></svg></div>
<div class="a row" style="top:939px;background:#fff"><div class="a" style="left:412px;top:0;width:1165px;height:38px;background:#fafafa"></div><div class="cb"></div><div class="c" style="left:40px;letter-spacing:0.56px">PP202303280...</div><div class="c" style="left:170px;letter-spacing:0.81px">DWTest2023032805</div><div class="c" style="left:420px">头程</div><div class="c" style="left:670px">否</div><div class="c lk" style="left:920px">总采购项<span style="letter-spacing:0.81px">:1</span></div><div class="c" style="left:1240px">-</div><div class="c" style="left:1390px"><span style="letter-spacing:0.84px">H016-</span>代伟<span style="letter-spacing:0.84px">Andy</span></div><div class="c" style="left:1520px;letter-spacing:1.02px">2023-03</div><div class="a" style="left:1577px;top:0;width:280px;height:38px;background:#fff"></div><div class="c" style="left:1585px">采购中</div><div class="c" style="left:1665px">审核通过</div><svg class="ic" style="left:1755px;top:12.500px" width="13" height="13" viewBox="0 0 14 14"><circle cx="5.800" cy="5.800" r="4.300" stroke="#1878f5" stroke-width="1.300" fill="none"/><path d="M9 9L13 13" stroke="#1878f5" stroke-width="1.400" stroke-linecap="round"/></svg><svg class="ic" style="left:1786px;top:12.500px" width="13" height="13" viewBox="0 0 14 14"><path d="M1 2.500H5.500L7 4H13V12H1Z" stroke="#1878f5" stroke-width="1.200" fill="none" stroke-linejoin="round"/><path d="M7 6V10M5 8H9" stroke="#1878f5" stroke-width="1.200"/></svg></div>
<div class="a row" style="top:978px;background:#fff"><div class="cb"></div><div class="c" style="left:40px;letter-spacing:0.56px">PP202303280...</div><div class="c" style="left:170px;letter-spacing:0.93px">storm202303281648</div><div class="c" style="left:420px">头程</div><div class="c" style="left:670px">是</div><div class="c lk" style="left:920px">总采购项<span style="letter-spacing:0.81px">:1</span></div><div class="c" style="left:1240px">-</div><div class="c" style="left:1390px">-</div><div class="c" style="left:1520px">-</div><div class="a" style="left:1577px;top:0;width:280px;height:38px;background:#fff"></div><div class="c" style="left:1585px">创建中</div><div class="c" style="left:1665px">无</div><svg class="ic" style="left:1755px;top:12px" width="14" height="14" viewBox="0 0 14 14"><path d="M1.500 3.300H12.500M5 3V1.500H9V3M2.800 3.500L3.500 13H10.500L11.200 3.500" stroke="#1878f5" stroke-width="1.200" fill="none" stroke-linejoin="round" stroke-linecap="round"/></svg><svg class="ic" style="left:1786px;top:12px;margin-left:-0.700px" width="13.500" height="14" viewBox="0 0 14 14"><path d="M3 9.500L9.500 2.500L11.500 4.500L5 11L2.700 11.400Z" stroke="#1878f5" stroke-width="1.200" fill="none" stroke-linejoin="round"/><path d="M1 13.300H13" stroke="#1878f5" stroke-width="1.200"/></svg></div>
<div class="a" style="left:1657px;top:393px;width:280px;height:39px;background:#f5f5f5"></div>
<div class="a" style="left:1647px;top:393px;width:10px;height:627px;background:linear-gradient(90deg,rgba(0,0,0,0),rgba(0,0,0,0.07))"></div>
<div class="t th" style="left:1665px">状态</div><div class="t th" style="left:1745px">修改状态</div><div class="t th" style="left:1835px">操作</div><div class="a sep" style="left:1736px"></div><div class="a sep" style="left:1826px"></div>
<div class="a" style="left:80px;top:1017px;width:1857px;height:3px;background:#fff"></div><div class="a" style="left:492px;top:1017px;width:1165px;height:3px;background:#fafafa"></div>
<div class="a" style="left:1937px;top:432px;width:15px;height:588px;background:#fafafa;border-left:1px solid #e8e8e8;border-right:1px solid #e8e8e8"></div>
<div class="a" style="left:1941px;top:433px;width:8px;height:431px;border-radius:4px;background:#b6b6b6"></div>
<div class="a" style="left:80px;top:1020px;width:1872px;height:15px;background:#fafafa;border-top:1px solid #e8e8e8;border-bottom:1px solid #e8e8e8;border-right:1px solid #e8e8e8"></div>
<div class="a" style="left:81px;top:1024px;width:1488px;height:8px;border-radius:4px;background:#b6b6b6"></div>
<svg class="a" style="left:1942px;top:618px" width="24" height="25" viewBox="0 0 24 25"><path d="M10.500 1L2 12.500L10.500 24M21.500 1L13 12.500L21.500 24" stroke="rgba(70,70,70,0.72)" stroke-width="2.100" fill="none"/></svg>
<div class="t pg" style="left:1360px;letter-spacing:0.500px">第 1-20 条/总共 772 条</div>
<svg class="a" style="left:1525px;top:1058px" width="8" height="12" viewBox="0 0 8 12"><path d="M7 1L1.500 6L7 11" stroke="#c0c0c0" stroke-width="1.200" fill="none"/></svg>
<div class="a" style="left:1542px;top:1051px;width:24px;height:24px;border:1px solid #1878f5;border-radius:2px"></div>
<div class="t pg" style="left:1549px;color:#1878f5">1</div>
<div class="t pg" style="left:1573.5px;letter-spacing:0.800px">2</div><div class="t pg" style="left:1597.5px;letter-spacing:0.800px">3</div><div class="t pg" style="left:1621.5px;letter-spacing:0.800px">4</div><div class="t pg" style="left:1645.5px;letter-spacing:0.800px">5</div><div class="t pg" style="left:1701px;letter-spacing:0.800px">39</div>
<svg class="a" style="left:1668.500px;top:1061.500px" width="18" height="4" viewBox="0 0 18 4"><circle cx="1.800" cy="2" r="1.450" fill="#bdbdbd"/><circle cx="8.700" cy="2" r="1.450" fill="#bdbdbd"/><circle cx="15.600" cy="2" r="1.450" fill="#bdbdbd"/></svg>
<svg class="a" style="left:1733px;top:1058px" width="8" height="12" viewBox="0 0 8 12"><path d="M1 1L6.500 6L1 11" stroke="#333" stroke-width="1.200" fill="none"/></svg>
<div class="a" style="left:1751px;top:1051px;width:91px;height:24px;border:1px solid #d4d4d4;border-radius:2px"></div>
<div class="t pg" style="left:1760px;letter-spacing:0.400px">20 条/页</div>
<svg class="a" style="left:1819px;top:1059px" width="11" height="8" viewBox="0 0 11 8"><path d="M1 1.300L5.500 6L10 1.300" stroke="#b0b0b0" stroke-width="1" fill="none"/></svg>
<div class="t pg" style="left:1850px">跳至</div>
<div class="a" style="left:1886px;top:1051px;width:44px;height:24px;border:1px solid #d4d4d4;border-radius:2px"></div>
<div class="t pg" style="left:1938px">页</div>
<div class="a" style="left:62px;top:1091px;width:1908px;height:1px;background:#eef0f3"></div>
<svg class="a" style="left:0;top:0" width="2032" height="1167" viewBox="0 0 2032 1167"><rect x="742" y="511.2" width="70.8" height="39.7" rx="1" stroke="#d1010f" stroke-width="4" fill="none" stroke-linejoin="round"/><rect x="1170" y="512.9" width="83" height="34.9" rx="1" stroke="#d1010f" stroke-width="4" fill="none" stroke-linejoin="round"/><path d="M1064.8 343.2L1175.3 507.3" stroke="#d1010f" stroke-width="4.3" stroke-linecap="butt"/><path d="M1183.7 519.8L1166.8 508.4L1174.2 505.7L1179.5 499.85Z" fill="#d1010f"/></svg>
</div>
</body></html>
